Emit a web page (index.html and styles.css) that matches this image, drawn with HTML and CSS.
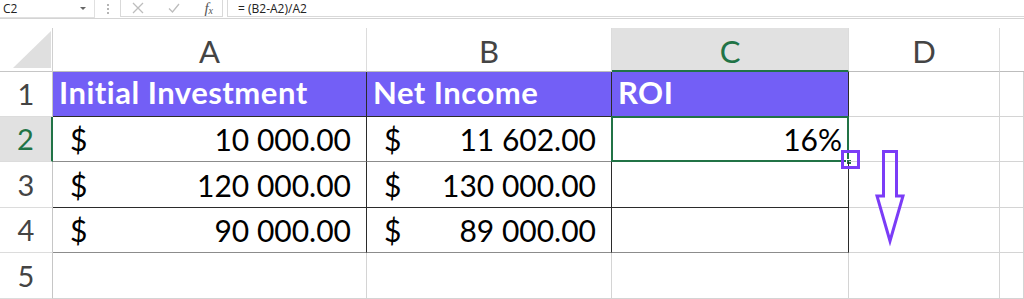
FILE: index.html
```html
<!DOCTYPE html>
<html>
<head>
<meta charset="utf-8">
<link rel="stylesheet" href="styles.css">
</head>
<body>
<div class="formula-bar">
  <div class="namebox"><span>C2</span><span class="caret"></span></div>
  <div class="grip"><i></i><i></i><i></i></div>
  <div class="fx-buttons">
    <svg class="btn" width="12" height="12" viewBox="0 0 12 12"><path d="M1 1L11 11M11 1L1 11" stroke="#bdbdbd" stroke-width="1.3" fill="none"/></svg>
    <svg class="btn" width="12" height="12" viewBox="0 0 12 12"><path d="M1 6.5L4.5 10L11 2" stroke="#bdbdbd" stroke-width="1.3" fill="none"/></svg>
    <span class="fx">f<sub>x</sub></span>
  </div>
  <div class="formula">= (B2-A2)/A2</div>
</div>
<div class="sheet">
  <div class="corner"><div class="tri"></div></div>
  <div class="colhead">A</div>
  <div class="colhead">B</div>
  <div class="colhead sel">C</div>
  <div class="colhead">D</div>
  <div class="colhead last"></div>

  <div class="rowhead">1</div>
  <div class="cell hdr">Initial Investment</div>
  <div class="cell hdr">Net Income</div>
  <div class="cell hdr">ROI</div>
  <div class="cell plain"></div>
  <div class="cell plain"></div>

  <div class="rowhead sel">2</div>
  <div class="cell acct b-gray"><span>$</span><span>10 000.00</span></div>
  <div class="cell acct b-gray"><span>$</span><span>11 602.00</span></div>
  <div class="cell pct active"><span>16%</span><div class="selbox"></div><div class="handle"></div></div>
  <div class="cell plain"></div>
  <div class="cell plain"></div>

  <div class="rowhead">3</div>
  <div class="cell acct b-dark"><span>$</span><span>120 000.00</span></div>
  <div class="cell acct b-dark"><span>$</span><span>130 000.00</span></div>
  <div class="cell acct b-dark"></div>
  <div class="cell plain"></div>
  <div class="cell plain"></div>

  <div class="rowhead">4</div>
  <div class="cell acct b-gray"><span>$</span><span>90 000.00</span></div>
  <div class="cell acct b-gray"><span>$</span><span>89 000.00</span></div>
  <div class="cell acct b-gray"></div>
  <div class="cell plain"></div>
  <div class="cell plain"></div>

  <div class="rowhead">5</div>
  <div class="cell plain"></div>
  <div class="cell plain"></div>
  <div class="cell plain"></div>
  <div class="cell plain"></div>
  <div class="cell plain"></div>

  <svg class="annot" width="80" height="110" viewBox="0 0 80 110">
    <rect x="6.5" y="5.5" width="16" height="16" fill="none" stroke="#7b3cf7" stroke-width="3"/>
    <path d="M47.5 5.5H60.5V50H67L54 95L41 50H47.5Z" fill="none" stroke="#7b3cf7" stroke-width="3" stroke-linejoin="miter"/>
  </svg>
</div>
</body>
</html>
```
FILE: styles.css
```css
* { box-sizing: border-box; }
html, body { margin: 0; padding: 0; background: #fff; }
body { width: 1024px; height: 299px; overflow: hidden; font-family: "Open Sans", "Noto Sans", sans-serif; }

.formula-bar {
  height: 19px;
  display: flex;
  border-bottom: 1px solid #d4d4d4;
  background: #fff;
  font-size: 12px;
  color: #222;
}
.namebox {
  width: 95px;
  display: flex;
  align-items: center;
  justify-content: space-between;
  padding: 0 8px 0 3px;
  border-right: 1px solid #e0e0e0;
  border-bottom: 1px solid #e0e0e0;
}
.caret {
  width: 0; height: 0;
  border-left: 3px solid transparent;
  border-right: 3px solid transparent;
  border-top: 3px solid #666;
}
.grip {
  width: 25px;
  display: flex;
  flex-direction: column;
  align-items: center;
  justify-content: center;
  gap: 2px;
}
.grip i { width: 2px; height: 2px; background: #b5b5b5; display: block; }
.fx-buttons {
  width: 103px;
  display: flex;
  align-items: center;
  justify-content: space-between;
  padding: 0 9px 0 11px;
  border: 1px solid #d9d9d9;
  border-top: none;
  margin-bottom: 1px;
}
.fx {
  font-family: "Liberation Serif", serif;
  font-style: italic;
  font-size: 15px;
  color: #555;
  line-height: 1;
}
.fx sub { font-size: 10px; vertical-align: -1px; }
.formula {
  flex: 1;
  margin-left: 4px;
  padding-left: 10px;
  display: flex;
  align-items: center;
  border-left: 1px solid #d9d9d9;
  border-bottom: 1px solid #d9d9d9;
  margin-bottom: 1px;
}

.sheet {
  position: relative;
  margin-top: 9px;
  display: grid;
  grid-template-columns: 53px 314px 245px 237px 151px 24px;
  grid-template-rows: 44px 45px 45px 46px 45px 46px;
  font-family: "Lato", "Open Sans", sans-serif;
}
.corner {
  position: relative;
  border-right: 1px solid #d0d0d0;
  border-bottom: 1px solid #c6c6c6;
}
.tri {
  position: absolute;
  left: 13px; top: 3px;
  width: 38px; height: 37px;
  background: #dfdfdf;
  clip-path: polygon(100% 0, 100% 100%, 0 100%);
}
.colhead {
  display: flex;
  align-items: flex-end;
  justify-content: center;
  padding-bottom: 1px;
  font-size: 31px;
  color: #444;
  border-right: 1px solid #dcdcdc;
  border-bottom: 1px solid #bdbdbd;
}
.colhead.sel {
  background: #e1e1e1;
  color: #217346;
  border-bottom: 2px solid #217346;
  padding-bottom: 0;
}
.colhead.last { border-right: none; }
.rowhead {
  display: flex;
  align-items: flex-end;
  justify-content: center;
  padding-bottom: 5px;
  font-size: 29px;
  color: #444;
  border-right: 1px solid #c6c6c6;
  border-bottom: 1px solid #dcdcdc;
}
.rowhead.sel {
  background: #e1e1e1;
  color: #217346;
  border-right: 2px solid #217346;
}
.cell {
  display: flex;
  align-items: flex-end;
  font-size: 30px;
  color: #000;
  padding-bottom: 4px;
  border-right: 1px solid #d4d4d4;
  border-bottom: 1px solid #d4d4d4;
  position: relative;
}
.cell.hdr {
  background: #735ff6;
  color: #fff;
  font-weight: bold;
  font-size: 31px;
  letter-spacing: 0.5px;
  padding-left: 6px;
  padding-bottom: 5px;
  border-right: 1px solid #2b2b2b;
  border-bottom: 1px solid #2b2b2b;
}
.cell.acct {
  justify-content: space-between;
  padding-left: 17px;
  padding-right: 15px;
  border-right: 1px solid #2b2b2b;
}
.cell.b-gray { border-bottom: 1px solid #8c8c8c; }
.cell.b-dark { border-bottom: 1px solid #2b2b2b; }
.cell.pct {
  justify-content: flex-end;
  padding-right: 6px;
  border-right: 1px solid #2b2b2b;
  border-bottom: 1px solid #2b2b2b;
}
.selbox {
  position: absolute;
  left: -1px; top: -1px; right: -1px; bottom: -1px;
  border: 2px solid #217346;
  pointer-events: none;
}
.handle {
  position: absolute;
  right: -4px; bottom: -4px;
  width: 6px; height: 6px;
  background: #217346;
  border: 1px solid #fff;
}
.annot {
  position: absolute;
  left: 836px;
  top: 118px;
}
```
